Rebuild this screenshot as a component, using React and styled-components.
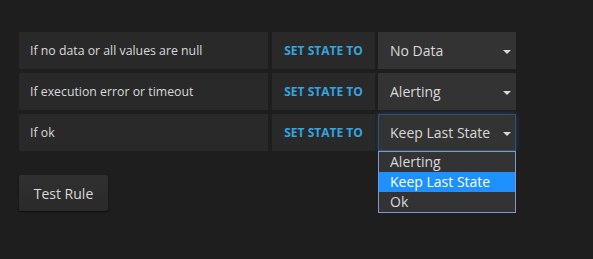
import React from "react";
import styled, { createGlobalStyle } from "styled-components";

const GlobalStyle = createGlobalStyle`
  html, body {
    margin: 0;
    background: #1f1e1f;
    font-family: "Open Sans", "Liberation Sans", sans-serif;
  }
`;

const Page = styled.div`
  width: 593px;
  height: 259px;
  box-sizing: border-box;
  padding: 32px 0 0 19px;
  background: #1f1e1f;
`;

const Rules = styled.div`
  display: flex;
  flex-direction: column;
  gap: 4px;
`;

const Row = styled.div`
  display: flex;
  height: 37px;
`;

const Label = styled.div`
  width: 249px;
  margin-right: 4px;
  background: #292929;
  color: #d8d9da;
  font-size: 12.3px;
  display: flex;
  align-items: center;
  padding-left: 11px;
  box-sizing: border-box;
`;

const Keyword = styled.div`
  width: 103px;
  margin-right: 3px;
  background: #292929;
  color: #33a5e0;
  font-size: 12px;
  font-weight: 700;
  display: flex;
  align-items: center;
  justify-content: center;
`;

const SelectWrap = styled.div`
  position: relative;
  width: 138px;
`;

const Select = styled.div`
  height: 100%;
  box-sizing: border-box;
  background: #333333;
  color: #d8d9da;
  font-size: 14px;
  display: flex;
  align-items: center;
  padding-left: 11px;
  border: 1px solid ${(p) => (p.$focused ? "#35506f" : "transparent")};
  box-shadow: ${(p) =>
    p.$focused ? "0 0 5px rgba(51, 133, 229, 0.35)" : "none"};

  &::after {
    content: "";
    position: absolute;
    right: 5px;
    top: 18px;
    border-left: 4px solid transparent;
    border-right: 4px solid transparent;
    border-top: 4px solid #d8d9da;
  }
`;

const Menu = styled.ul`
  position: absolute;
  top: 100%;
  left: 0;
  right: 0;
  margin: 0;
  padding: 0;
  list-style: none;
  background: #333333;
  border: 1px solid #7a9bd0;
  z-index: 2;
`;

const Option = styled.li`
  height: 20px;
  line-height: 20px;
  padding-left: 11px;
  font-size: 14px;
  color: ${(p) => (p.$active ? "#ffffff" : "#d8d9da")};
  background: ${(p) => (p.$active ? "#1e90ff" : "transparent")};
`;

const Button = styled.button`
  margin-top: 24px;
  width: 89px;
  height: 36px;
  border: none;
  border-radius: 2px;
  background: linear-gradient(#303030, #2a2a2a);
  box-shadow: 0 1px 2px rgba(0, 0, 0, 0.6);
  color: #d8d9da;
  font-family: "Open Sans", "Liberation Sans", sans-serif;
  font-size: 14px;
  padding: 0;
`;

const rules = [
  { label: "If no data or all values are null", value: "No Data" },
  { label: "If execution error or timeout", value: "Alerting" },
  { label: "If ok", value: "Keep Last State", open: true },
];

const options = ["Alerting", "Keep Last State", "Ok"];

export default function App() {
  return (
    <Page>
      <GlobalStyle />
      <Rules>
        {rules.map((r) => (
          <Row key={r.label}>
            <Label>{r.label}</Label>
            <Keyword>SET STATE TO</Keyword>
            <SelectWrap>
              <Select $focused={r.open}>{r.value}</Select>
              {r.open && (
                <Menu>
                  {options.map((o) => (
                    <Option key={o} $active={o === r.value}>
                      {o}
                    </Option>
                  ))}
                </Menu>
              )}
            </SelectWrap>
          </Row>
        ))}
      </Rules>
      <Button>Test Rule</Button>
    </Page>
  );
}
